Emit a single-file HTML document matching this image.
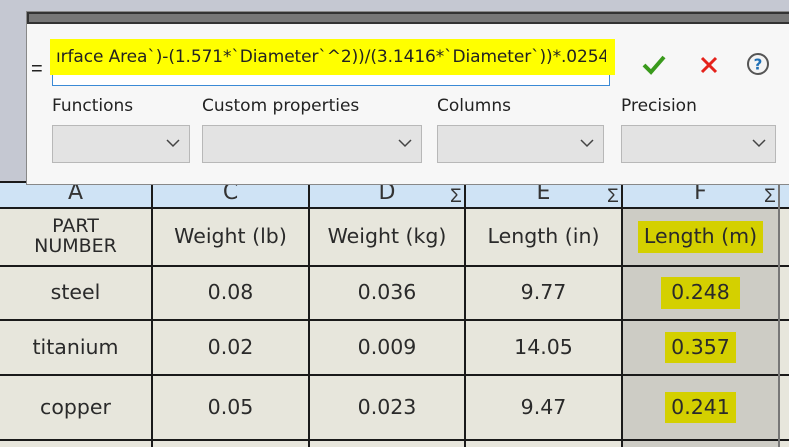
<!DOCTYPE html>
<html><head><meta charset="utf-8"><style>
*{margin:0;padding:0;box-sizing:border-box}
body{width:789px;height:447px;overflow:hidden;position:relative;background:#c5c8d2;font-family:"Liberation Sans","DejaVu Sans",sans-serif}
.a{position:absolute}
.lbl{font-family:"DejaVu Sans",sans-serif;font-size:17px;color:#222;top:96px}
.dd{top:125px;height:38px;border:1px solid #b8b8b8;background:#e3e3e3}
.dd svg{position:absolute;right:9px;top:13px}
.cell{display:flex;align-items:center;justify-content:center;font-family:"DejaVu Sans",sans-serif;font-size:20.5px;color:#2a2a2a;text-align:center;line-height:1.05}
.hl{background:#d4d000;padding:2px 6px}
.vl{width:2px;background:#1a1a1a;top:182px;height:265px}
.hr{height:2px;background:#1a1a1a;left:0;width:789px}
.sig{font-size:19px;color:#333;top:186px}
.col{font-family:"DejaVu Sans",sans-serif;font-size:22px;color:#333;top:180px;text-align:center}
</style></head><body>
<div class="a" style="left:0;top:182px;width:789px;height:26px;background:#cfe3f5"></div>
<div class="a" style="left:0;top:208px;width:789px;height:239px;background:#e7e6dc"></div>
<div class="a" style="left:622px;top:208px;width:157px;height:239px;background:#cdccc5"></div>
<div class="a hr" style="top:181px"></div>
<div class="a hr" style="top:207px"></div>
<div class="a hr" style="top:265px"></div>
<div class="a hr" style="top:319px"></div>
<div class="a hr" style="top:374px"></div>
<div class="a hr" style="top:439px"></div>
<div class="a vl" style="left:151px"></div>
<div class="a vl" style="left:308px"></div>
<div class="a vl" style="left:464px"></div>
<div class="a vl" style="left:621px"></div>
<div class="a vl" style="left:778px;background:#777"></div>
<div class="a col" style="left:0;width:151px">A</div>
<div class="a col" style="left:153px;width:155px">C</div>
<div class="a col" style="left:310px;width:154px">D</div>
<div class="a col" style="left:466px;width:155px">E</div>
<div class="a col" style="left:623px;width:155px">F</div>
<div class="a sig" style="left:450px">Σ</div>
<div class="a sig" style="left:607px">Σ</div>
<div class="a sig" style="left:764px">Σ</div>

<div class="a cell" style="left:0;top:209px;width:151px;height:56px;font-size:19px">PART<br>NUMBER</div>
<div class="a cell" style="left:153px;top:209px;width:155px;height:56px">Weight (lb)</div>
<div class="a cell" style="left:310px;top:209px;width:154px;height:56px">Weight (kg)</div>
<div class="a cell" style="left:466px;top:209px;width:155px;height:56px">Length (in)</div>
<div class="a cell" style="left:623px;top:209px;width:155px;height:56px"><span class="hl" style="padding:5px 6px">Length (m)</span></div>

<div class="a cell" style="left:0;top:267px;width:151px;height:52px">steel</div>
<div class="a cell" style="left:153px;top:267px;width:155px;height:52px">0.08</div>
<div class="a cell" style="left:310px;top:267px;width:154px;height:52px">0.036</div>
<div class="a cell" style="left:466px;top:267px;width:155px;height:52px">9.77</div>
<div class="a cell" style="left:623px;top:267px;width:155px;height:52px"><span class="hl" style="padding:5px 10px">0.248</span></div>

<div class="a cell" style="left:0;top:321px;width:151px;height:53px">titanium</div>
<div class="a cell" style="left:153px;top:321px;width:155px;height:53px">0.02</div>
<div class="a cell" style="left:310px;top:321px;width:154px;height:53px">0.009</div>
<div class="a cell" style="left:466px;top:321px;width:155px;height:53px">14.05</div>
<div class="a cell" style="left:623px;top:321px;width:155px;height:53px"><span class="hl" style="padding:5px 6px">0.357</span></div>

<div class="a cell" style="left:0;top:376px;width:151px;height:63px">copper</div>
<div class="a cell" style="left:153px;top:376px;width:155px;height:63px">0.05</div>
<div class="a cell" style="left:310px;top:376px;width:154px;height:63px">0.023</div>
<div class="a cell" style="left:466px;top:376px;width:155px;height:63px">9.47</div>
<div class="a cell" style="left:623px;top:376px;width:155px;height:63px"><span class="hl" style="padding:5px 6px">0.241</span></div>

<div class="a" style="left:26px;top:11px;width:780px;height:174px;background:#f7f7f7;border:1px solid #888"></div>
<div class="a" style="left:27px;top:12px;width:770px;height:12px;background:#777;border:2px solid #333"></div>
<div class="a" style="left:31px;top:58px;font-size:20px;color:#222">=</div>
<div class="a" style="left:52px;top:40px;width:558px;height:46px;background:#fff;border:1px solid #3a8ad6"></div>
<div class="a" style="left:50px;top:39px;width:565px;height:36px;background:#ffff00"></div>
<div class="a" style="left:56px;top:47px;width:550px;overflow:hidden;white-space:nowrap;font-family:'DejaVu Sans',sans-serif;font-size:17px;letter-spacing:-0.1px;color:#222">ırface Area`)-(1.571*`Diameter`^2))/(3.1416*`Diameter`))*.0254<span style="border-left:1.5px solid #000;margin-left:1px"></span></div>
<svg class="a" style="left:641px;top:53px" width="26" height="24" viewBox="0 0 26 24"><path d="M3 12 L10 19 L23 4" fill="none" stroke="#3a9a1c" stroke-width="4"/></svg>
<svg class="a" style="left:699px;top:55px" width="20" height="20" viewBox="0 0 20 20"><path d="M3 3L17 17M17 3L3 17" stroke="#e5221b" stroke-width="3"/></svg>
<svg class="a" style="left:746px;top:52px" width="24" height="24" viewBox="0 0 24 24"><circle cx="12" cy="12" r="10" fill="#f4f4f4" stroke="#555" stroke-width="2"/><text x="12" y="17.5" text-anchor="middle" font-family="DejaVu Sans" font-weight="bold" font-size="15" fill="#1f6fb5">?</text></svg>
<div class="a lbl" style="left:52px">Functions</div>
<div class="a lbl" style="left:202px">Custom properties</div>
<div class="a lbl" style="left:437px">Columns</div>
<div class="a lbl" style="left:621px">Precision</div>
<div class="a dd" style="left:52px;width:138px"><svg width="14" height="9"><path d="M1 1L7 7L13 1" fill="none" stroke="#444" stroke-width="1.5"/></svg></div>
<div class="a dd" style="left:202px;width:220px"><svg width="14" height="9"><path d="M1 1L7 7L13 1" fill="none" stroke="#444" stroke-width="1.5"/></svg></div>
<div class="a dd" style="left:437px;width:167px"><svg width="14" height="9"><path d="M1 1L7 7L13 1" fill="none" stroke="#444" stroke-width="1.5"/></svg></div>
<div class="a dd" style="left:621px;width:155px"><svg width="14" height="9"><path d="M1 1L7 7L13 1" fill="none" stroke="#444" stroke-width="1.5"/></svg></div>
</body></html>
